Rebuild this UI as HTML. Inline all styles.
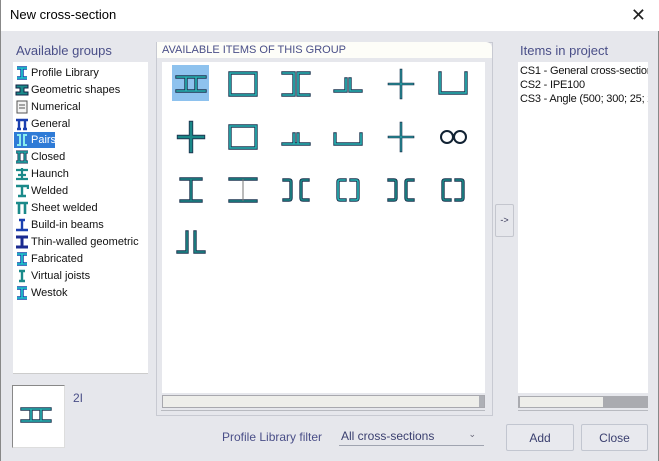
<!DOCTYPE html>
<html><head><meta charset="utf-8"><style>
*{margin:0;padding:0;box-sizing:border-box}
body{width:659px;height:461px;overflow:hidden;background:#e6e7ec;font-family:"Liberation Sans",sans-serif;position:relative;border-left:1px solid #888;border-right:1px solid #888}
.a{position:absolute}
.title{left:0;top:0;width:659px;height:31px;background:#fff;font-size:13px;color:#000;padding:7px 0 0 9px}
.lbl{color:#4a4f88;font-size:13px}
.white{background:#fff}
.li{position:absolute;left:14px;font-size:11px;color:#111;height:16px;line-height:16px;white-space:nowrap}
.li svg{vertical-align:middle;margin-right:2px}
.o{fill:none;stroke:#1d3550;stroke-width:3.4;stroke-linecap:square}
.i{fill:none;stroke:#27b4b4;stroke-width:1.6;stroke-linecap:square}
.btn{border:1px solid #c2c6d0;background:#e8e9ee;font-size:12px;color:#3a3f6f;text-align:center;line-height:26px;border-radius:2px}
</style></head><body>
<div class="a title">New cross-section</div>
<div class="a" style="right:12px;top:5px;font-size:18px;color:#222">✕</div>

<div class="a lbl" style="left:15px;top:43px">Available groups</div>
<div class="a white" style="left:12px;top:62px;width:135px;height:312px;border-bottom:1px solid #ccc"></div>
<svg width="0" height="0" style="position:absolute"><defs>
<g id="gi"><path d="M2 2H12M2 12H12M7 2V12" stroke="#14a" stroke-width="3.5" fill="none"/><path d="M2 2H12M2 12H12M7 2V12" stroke="#2cc" stroke-width="1.6" fill="none"/></g>
</defs></svg>
<div class="li" style="top:65px"><svg width="14" height="14"><use href="#gi"/></svg>Profile Library</div>
<div class="li" style="top:82px"><svg width="14" height="14"><path d="M1 2H13V5H9V9H13V12H1V9H5V5H1Z" fill="#1a8a8a" stroke="#124"/></svg>Geometric shapes</div>
<div class="li" style="top:99px"><svg width="14" height="14"><rect x="2" y="1" width="10" height="12" fill="#f4f4f4" stroke="#555"/><path d="M4 5H10M4 8H10" stroke="#555"/></svg>Numerical</div>
<div class="li" style="top:116px"><svg width="14" height="14"><path d="M1 3H13M4 3V12M10 3V12M2 12H6M8 12H12" stroke="#1a3fb0" stroke-width="2.4" fill="none"/></svg>General</div>
<div class="a" style="left:13px;top:132px;width:41px;height:16px;background:#2f7bd6"></div>
<div class="li" style="top:132px;color:#fff"><svg width="14" height="14"><path d="M2 2H5V12H2M12 2H9V12H12" stroke="#8ee" stroke-width="2" fill="none"/></svg>Pairs</div>
<div class="li" style="top:149px"><svg width="14" height="14"><path d="M1 2H13M1 12H13M4 2V12M10 2V12" stroke="#124" stroke-width="3" fill="none"/><path d="M1 2H13M1 12H13M4 2V12M10 2V12" stroke="#2aa" stroke-width="1.4" fill="none"/></svg>Closed</div>
<div class="li" style="top:166px"><svg width="14" height="14"><path d="M1 3H13M3 8H11M1 12H13M7 1V13" stroke="#1a8a8a" stroke-width="2.2" fill="none"/></svg>Haunch</div>
<div class="li" style="top:183px"><svg width="14" height="14"><path d="M1 2H13V5M3 12H11M7 2V12" stroke="#1a8a8a" stroke-width="2.4" fill="none"/></svg>Welded</div>
<div class="li" style="top:200px"><svg width="14" height="14"><path d="M1 2H13M4 2V13M10 2V13" stroke="#1a8a8a" stroke-width="2.6" fill="none"/></svg>Sheet welded</div>
<div class="li" style="top:217px"><svg width="14" height="14"><path d="M4 2H10M7 2V12M1 12H13" stroke="#1a3fb0" stroke-width="2.4" fill="none"/></svg>Build-in beams</div>
<div class="li" style="top:234px"><svg width="14" height="14"><path d="M1 2H13M1 12H13M7 2V12" stroke="#1a2a90" stroke-width="3" fill="none"/></svg>Thin-walled geometric</div>
<div class="li" style="top:251px"><svg width="14" height="14"><use href="#gi"/></svg>Fabricated</div>
<div class="li" style="top:268px"><svg width="14" height="14"><path d="M4 2H10M4 12H10M7 2V12" stroke="#1a8a8a" stroke-width="2.4" fill="none"/></svg>Virtual joists</div>
<div class="li" style="top:285px"><svg width="14" height="14"><use href="#gi"/></svg>Westok</div>

<div class="a white" style="left:11px;top:385px;width:53px;height:63px;border:1px solid #888;border-right-color:#ddd;border-bottom-color:#ddd"></div>
<svg class="a" style="left:18px;top:400px" width="34" height="34"><path d="M3 9H31M3 21H31M12 9V21M22 9V21" class="o"/><path d="M3 9H31M3 21H31M12 9V21M22 9V21" class="i"/></svg>
<div class="a lbl" style="left:72px;top:391px;font-size:12px">2I</div>

<div class="a" style="left:155px;top:42px;width:337px;height:374px;border:1px solid #c8cad2;background:#e6e7ec"></div>
<div class="a" style="left:156px;top:42px;width:335px;height:16px;background:#fdfdf8;border-radius:0 6px 0 0;font-size:11px;color:#4a4f88;padding:2px 0 0 5px">AVAILABLE ITEMS OF THIS GROUP</div>
<div class="a white" style="left:161px;top:62px;width:323px;height:331px"></div>
<div class="a" style="left:161px;top:395px;width:323px;height:13px;background:#aeb0b6;border:1px solid #a8a8ae"></div>
<div class="a" style="left:162px;top:396px;width:316px;height:11px;background:#eeeeea"></div>
<div class="a" style="left:160px;top:410px;width:324px;height:1px;background:#b8bac0"></div>
<div class="a" style="left:171px;top:65px;width:37px;height:36px;background:#8ec2ee"></div>

<svg class="a" style="left:161px;top:62px" width="323" height="331">
<defs>
<path id="p1" d="M3 10H31M3 24H31M12 10V24M22 10V24"/>
<path id="p2" d="M4 6H30V28H4Z"/>
<path id="p3" d="M4 6H15V28H4M30 6H19V28H30"/>
<path id="p4" d="M4 24H15V12M30 24H19V12"/>
<path id="p5" d="M17 3V31M5 17H29"/>
<path id="p6" d="M4 6V26H30V6"/>
<path id="p9" d="M4 24H30M15 24V14M19 24V14"/>
<path id="p10" d="M4 14V24H30V14"/>
<path id="p13" d="M7 6H27M7 28H27M17 6V28"/>
<path id="p15" d="M5 7H10Q12 7 12 9V25Q12 27 10 27H5M29 7H24Q22 7 22 9V25Q22 27 24 27H29"/>
<path id="p16" d="M14 7H9Q7 7 7 9V25Q7 27 9 27H14M20 7H25Q27 7 27 9V25Q27 27 25 27H20"/>
<path id="p19" d="M13 6V26H4M21 6V26H30"/>
</defs>
<g transform="translate(12,5)"><use href="#p1" class="o"/><use href="#p1" class="i"/></g>
<g transform="translate(64,5)"><use href="#p2" class="o"/><use href="#p2" class="i"/></g>
<g transform="translate(117,5)"><use href="#p3" class="o"/><use href="#p3" class="i"/></g>
<g transform="translate(169,5)"><use href="#p4" class="o"/><use href="#p4" class="i"/></g>
<g transform="translate(222,5)"><use href="#p5" class="o" style="stroke-width:2.6"/><use href="#p5" class="i" style="stroke-width:1"/></g>
<g transform="translate(274,5)"><use href="#p6" class="o"/><use href="#p6" class="i"/></g>

<g transform="translate(12,58)"><use href="#p5" class="o" style="stroke-width:4.4"/><use href="#p5" class="i" style="stroke:#1a8888;stroke-width:2.6"/></g>
<g transform="translate(64,58)"><use href="#p2" class="o"/><use href="#p2" class="i"/></g>
<g transform="translate(117,58)"><use href="#p9" class="o"/><use href="#p9" class="i"/></g>
<g transform="translate(169,58)"><use href="#p10" class="o"/><use href="#p10" class="i"/></g>
<g transform="translate(222,58)"><use href="#p5" class="o" style="stroke-width:2.6"/><use href="#p5" class="i" style="stroke-width:1"/></g>
<g transform="translate(274,58)"><circle cx="11" cy="17" r="6" fill="none" stroke="#123" stroke-width="2"/><circle cx="24" cy="17" r="6" fill="none" stroke="#123" stroke-width="2"/></g>

<g transform="translate(12,111)"><use href="#p13" class="o"/><use href="#p13" class="i" style="stroke:#1a8888"/></g>
<g transform="translate(64,111)"><path d="M4 6H30M4 28H30" class="o"/><path d="M4 6H30M4 28H30" class="i" style="stroke:#1a8888"/><path d="M17 6V28" stroke="#777" stroke-width="1"/></g>
<g transform="translate(117,111)"><use href="#p15" class="o"/><use href="#p15" class="i" style="stroke:#1a8888"/></g>
<g transform="translate(169,111)"><use href="#p16" class="o"/><use href="#p16" class="i"/></g>
<g transform="translate(222,111)"><use href="#p15" class="o"/><use href="#p15" class="i" style="stroke:#1a8888"/></g>
<g transform="translate(274,111)"><use href="#p16" class="o"/><use href="#p16" class="i" style="stroke:#1a8888"/></g>

<g transform="translate(12,164)"><use href="#p19" class="o"/><use href="#p19" class="i" style="stroke:#1a8888"/></g>
</svg>

<div class="a" style="left:494px;top:204px;width:19px;height:33px;border:1px solid #c4c6ce;border-radius:2px;font-size:9px;color:#335;text-align:center;line-height:31px">-&gt;</div>

<div class="a lbl" style="left:519px;top:43px">Items in project</div>
<div class="a white" style="left:517px;top:62px;width:130px;height:331px;overflow:hidden;font-size:11px;color:#111;padding:2px 0 0 2px;line-height:14px;white-space:nowrap;letter-spacing:-0.2px">CS1 - General cross-section<br>CS2 - IPE100<br>CS3 - Angle (500; 300; 25; 25)</div>
<div class="a" style="left:517px;top:396px;width:130px;height:12px;background:#aaabb0"></div>
<div class="a" style="left:519px;top:397px;width:83px;height:10px;background:#eeeeea"></div>
<div class="a" style="left:517px;top:410px;width:130px;height:1px;background:#b8bac0"></div>

<div class="a lbl" style="left:221px;top:430px;font-size:12px">Profile Library filter</div>
<div class="a" style="left:338px;top:426px;width:145px;height:20px;border-bottom:1px solid #a0a4b0;font-size:12px;color:#3a3f6f;padding:3px 0 0 2px">All cross-sections<span style="position:absolute;right:8px;top:3px;font-size:9px;color:#667">&#8964;</span></div>

<div class="a btn" style="left:505px;top:424px;width:68px;height:27px">Add</div>
<div class="a btn" style="left:580px;top:424px;width:67px;height:27px">Close</div>
</body></html>
